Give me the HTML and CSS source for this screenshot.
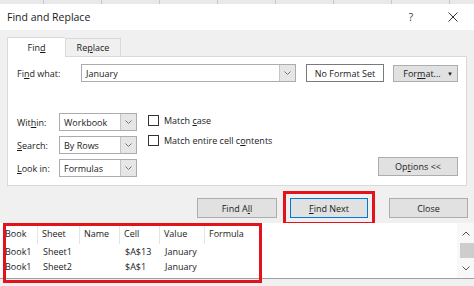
FILE: index.html
```html
<!DOCTYPE html>
<html lang="en">
<head>
    <meta charset="UTF-8">
    <meta name="viewport" content="width=device-width, initial-scale=1.0">
    <title>Find and Replace</title>
    <link rel="stylesheet" href="styles.css">
</head>
<body>
    <div class="sheet-strip"></div>
    <div class="titlebar">
        <span class="title">Find and Replace</span>
        <span class="help">?</span>
        <span class="close-x">
            <svg width="10" height="10" viewBox="0 0 10 10"><path d="M0.5 0.5 L9.5 9.5 M9.5 0.5 L0.5 9.5" stroke="#333" stroke-width="1" fill="none"/></svg>
        </span>
    </div>
    <div class="dialog">
        <div class="tabs">
            <div class="tab active"><span>Fin<u>d</u></span></div>
            <div class="tab"><span>Re<u>p</u>lace</span></div>
        </div>
        <div class="panel">
            <div class="find-row">
                <label class="find-label">Fi<u>n</u>d what:</label>
                <div class="combo find-combo">
                    <span class="combo-text">January</span>
                    <span class="combo-arrow"><svg width="7" height="4" viewBox="0 0 7 4"><path d="M0.5 0.5 L3.5 3.5 L6.5 0.5" stroke="#777" fill="none"/></svg></span>
                </div>
                <div class="format-set">No Format Set</div>
                <button class="btn format-btn">For<u>m</u>at... <span class="caret">&#9660;</span></button>
            </div>
            <div class="options">
                <div class="selects">
                    <div class="sel-row">
                        <label>Wit<u>h</u>in:</label>
                        <div class="combo sel">
                            <span class="combo-text">Workbook</span>
                            <span class="combo-arrow"><svg width="7" height="4" viewBox="0 0 7 4"><path d="M0.5 0.5 L3.5 3.5 L6.5 0.5" stroke="#777" fill="none"/></svg></span>
                        </div>
                    </div>
                    <div class="sel-row">
                        <label><u>S</u>earch:</label>
                        <div class="combo sel">
                            <span class="combo-text">By Rows</span>
                            <span class="combo-arrow"><svg width="7" height="4" viewBox="0 0 7 4"><path d="M0.5 0.5 L3.5 3.5 L6.5 0.5" stroke="#777" fill="none"/></svg></span>
                        </div>
                    </div>
                    <div class="sel-row">
                        <label><u>L</u>ook in:</label>
                        <div class="combo sel">
                            <span class="combo-text">Formulas</span>
                            <span class="combo-arrow"><svg width="7" height="4" viewBox="0 0 7 4"><path d="M0.5 0.5 L3.5 3.5 L6.5 0.5" stroke="#777" fill="none"/></svg></span>
                        </div>
                    </div>
                </div>
                <div class="checks">
                    <div class="check"><span class="box"></span><span>Match <u>c</u>ase</span></div>
                    <div class="check"><span class="box"></span><span>Match entire cell c<u>o</u>ntents</span></div>
                </div>
                <button class="btn options-btn">Op<u>t</u>ions &lt;&lt;</button>
            </div>
        </div>
        <div class="actions">
            <button class="btn action">Find A<u>l</u>l</button>
            <button class="btn action primary"><u>F</u>ind Next</button>
            <button class="btn action close">Close</button>
        </div>
    </div>
    <div class="results">
        <div class="grid">
            <div class="row head">
                <span>Book</span><span>Sheet</span><span>Name</span><span>Cell</span><span>Value</span><span>Formula</span>
            </div>
            <div class="row">
                <span>Book1</span><span>Sheet1</span><span></span><span>$A$13</span><span>January</span><span></span>
            </div>
            <div class="row">
                <span>Book1</span><span>Sheet2</span><span></span><span>$A$1</span><span>January</span><span></span>
            </div>
        </div>
        <div class="scrollbar">
            <span class="arrow"><svg width="8" height="5" viewBox="0 0 8 5"><path d="M0.5 4.5 L4 1 L7.5 4.5" stroke="#555" fill="none"/></svg></span>
            <span class="thumb"></span>
            <span class="arrow"><svg width="8" height="5" viewBox="0 0 8 5"><path d="M0.5 0.5 L4 4 L7.5 0.5" stroke="#555" fill="none"/></svg></span>
        </div>
        <div class="mark"></div>
    </div>
    <div class="status">2 cell(s) found</div>
</body>
</html>
```

FILE: styles.css
```css
body {
    margin: 0;
    width: 474px;
    height: 286px;
    overflow: hidden;
    background-color: #f0f0f0;
    font-family: 'Open Sans', 'Noto Sans', sans-serif;
    font-size: 9px;
    color: #1a1a1a;
}

u {
    text-underline-offset: 1px;
}

.sheet-strip {
    height: 4px;
    background-color: #e9e9e9;
    background-image: repeating-linear-gradient(to right, transparent 0, transparent 42px, #c8c8c8 42px, #c8c8c8 43px, transparent 43px, transparent 58px);
    background-position: 1px 0;
}

.titlebar {
    height: 26px;
    background-color: #ffffff;
    display: flex;
    align-items: center;
    padding: 0 0 0 7px;
}

.title {
    font-size: 10.5px;
    flex: 1;
}

.help {
    font-size: 10px;
    color: #333;
    margin-right: 35px;
}

.close-x {
    display: flex;
    margin-right: 16px;
}

.dialog {
    padding: 6px 7px 0 7px;
}

.tabs {
    display: flex;
    align-items: flex-end;
    height: 20px;
}

.tab {
    height: 17px;
    width: 54px;
    border: 1px solid #d9d9d9;
    border-bottom: none;
    display: flex;
    align-items: center;
    justify-content: center;
    background-color: #f0f0f0;
}

.tab.active {
    height: 19px;
    width: 57px;
    background-color: #ffffff;
    border-right: none;
    position: relative;
    top: 1px;
}

.panel {
    background-color: #ffffff;
    border: 1px solid #d9d9d9;
    height: 121px;
    padding: 7px 8px 0 9px;
}

.find-row {
    display: flex;
    align-items: center;
}

.find-label {
    width: 64px;
}

.combo {
    display: flex;
    border: 1px solid #acacac;
    height: 16px;
    align-items: stretch;
}

.combo-text {
    flex: 1;
    padding-left: 4px;
    display: flex;
    align-items: center;
}

.combo-arrow {
    width: 15px;
    background-color: #e6e6e6;
    border-left: 1px solid #c4c4c4;
    display: flex;
    align-items: center;
    justify-content: center;
}

.find-combo {
    width: 213px;
}

.format-set {
    margin-left: 10px;
    width: 76px;
    height: 16px;
    border: 1px solid #7a7a7a;
    display: flex;
    align-items: center;
    justify-content: center;
}

.btn {
    font-family: inherit;
    font-size: 9px;
    color: #1a1a1a;
    background-color: #e1e1e1;
    border: 1px solid #adadad;
    padding: 0;
    margin: 0;
}

.format-btn {
    margin-left: 9px;
    width: 65px;
    height: 17px;
    text-align: right;
    padding-right: 4px;
}

.caret {
    font-size: 6px;
    margin-left: 4px;
    vertical-align: 1px;
}

.options {
    display: flex;
    margin-top: 31px;
}

.selects {
    display: flex;
    flex-direction: column;
    gap: 5px;
}

.sel-row {
    display: flex;
    align-items: center;
}

.sel-row label {
    width: 42px;
}

.sel {
    width: 76px;
}

.checks {
    margin-left: 11px;
    padding-top: 2px;
    display: flex;
    flex-direction: column;
    gap: 9px;
}

.check {
    display: flex;
    align-items: center;
    height: 11px;
}

.box {
    width: 9px;
    height: 9px;
    border: 1px solid #333;
    margin-right: 5px;
    background-color: #ffffff;
}

.options-btn {
    margin-left: auto;
    align-self: flex-end;
    width: 80px;
    height: 19px;
    margin-bottom: 1px;
}

.actions {
    display: flex;
    justify-content: flex-end;
    padding: 12px 0 5px 0;
}

.action {
    width: 80px;
    height: 20px;
}

.action.primary {
    width: 78px;
    margin-left: 13px;
    border-color: #0078d7;
    outline: 3px solid #e3131d;
    outline-offset: 4px;
}

.action.close {
    width: 79px;
    margin-left: 21px;
    margin-right: -1px;
}

.results {
    position: relative;
    height: 55px;
    background-color: #ffffff;
    border-bottom: 1px solid #a0a0a0;
    display: flex;
}

.grid {
    flex: 1;
}

.row {
    display: grid;
    grid-template-columns: 38px 42px 40px 40px 45px 45px;
    height: 15px;
    align-items: center;
}

.row span {
    padding-left: 5px;
    white-space: nowrap;
}

.row.head {
    height: 21px;
}

.row.head span {
    border-right: 1px solid #e5e5e5;
    height: 21px;
    display: flex;
    align-items: center;
    padding-left: 4px;
}

.row.head span:first-child {
    padding-left: 5px;
}

.row.head span:last-child {
    border-right: none;
}

.scrollbar {
    width: 17px;
    background-color: #f8f8f8;
    display: flex;
    flex-direction: column;
    align-items: stretch;
}

.arrow {
    height: 20px;
    display: flex;
    align-items: center;
    justify-content: center;
}

.thumb {
    height: 15px;
    margin-left: 3px;
    background-color: #cdcdcd;
}

.mark {
    position: absolute;
    left: 3px;
    top: 0;
    width: 253px;
    height: 54px;
    border: 3px solid #e3131d;
}

.status {
    padding: 4px 0 0 3px;
    font-size: 9px;
}
```
